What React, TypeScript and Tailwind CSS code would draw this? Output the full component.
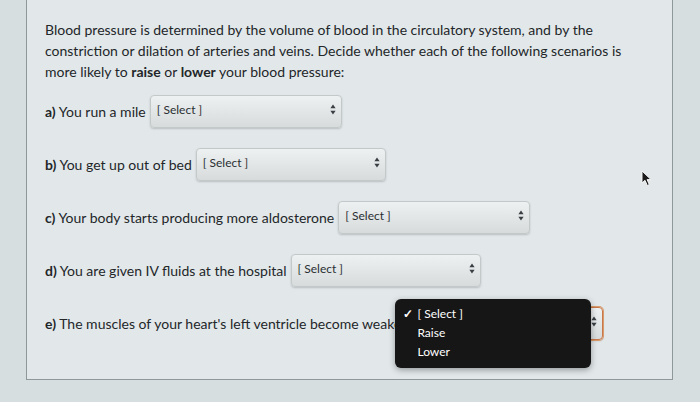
import React from "react";

const SortArrows = () => (
  <svg width="6" height="11" viewBox="0 0 6 11" className="shrink-0">
    <path d="M3 0.5 L5.6 4.3 H0.4 Z" fill="#3a3f44" />
    <path d="M3 10.5 L5.6 6.7 H0.4 Z" fill="#3a3f44" />
  </svg>
);

const SelectBox = ({ width, focused }: { width: number; focused?: boolean }) => (
  <div
    style={{ width }}
    className={
      "flex h-[33px] shrink-0 items-center justify-between rounded-[4px] border bg-gradient-to-b from-[#eef1f1] to-[#d7dbdc] pb-1 pl-[6px] pr-[5px] shadow-[0_1px_2px_rgba(0,0,0,0.18)] " +
      (focused ? "border-[#c8794a] ring-1 ring-[#d99a6c]" : "border-[#c3c8c9]")
    }
  >
    <span className="text-[12px] text-[#2a2f33]">[ Select ]</span>
    <SortArrows />
  </div>
);

const rows = [
  { tag: "a)", text: "You run a mile", width: 192 },
  { tag: "b)", text: "You get up out of bed", width: 190 },
  { tag: "c)", text: "Your body starts producing more aldosterone", width: 192 },
  { tag: "d)", text: "You are given IV fluids at the hospital", width: 190 },
];

const Cursor = () => (
  <svg width="12" height="17" viewBox="0 0 12 17" className="absolute left-[614px] top-[170px]">
    <path
      d="M1 1 L1 13 L4 10.3 L6.3 15.5 L8.3 14.6 L6.1 9.6 L10 9.6 Z"
      fill="#1a1a1a"
      stroke="#f4f4f4"
      strokeWidth="1"
    />
  </svg>
);

export default function App() {
  return (
    <div
      className="h-[402px] w-[700px] overflow-hidden bg-[#d7dedf] text-[#222629]"
      style={{ fontFamily: "Lato, 'Open Sans', sans-serif" }}
    >
      <div className="relative ml-[26px] h-[380px] w-[647px] border-x border-b border-[#8e9799] bg-[#e2e8ea]">
        <p className="ml-[18px] pt-[19px] text-[14px] leading-[21px]">
          Blood pressure is determined by the volume of blood in the circulatory system, and by the
          <br />
          constriction or dilation of arteries and veins. Decide whether each of the following scenarios is
          <br />
          more likely to <b>raise</b> or <b>lower</b> your blood pressure:
        </p>

        <div className="ml-[18px] mt-[13px] flex flex-col gap-[20px]">
          {rows.map((r) => (
            <div key={r.tag} className="flex items-center gap-[4px]">
              <span className="text-[14px]">
                <b>{r.tag}</b> {r.text}
              </span>
              <SelectBox width={r.width} />
            </div>
          ))}

          <div className="flex items-center gap-[4px]">
            <span className="whitespace-nowrap text-[14px]">
              <b>e)</b> The muscles of your heart's left ventricle become weaker
            </span>
            <div className="relative">
              <SelectBox width={193} focused />
              <div className="absolute left-[-15px] top-[-8px] flex h-[69px] w-[196px] flex-col rounded-[6px] bg-[#161616] px-[8px] py-[5px] text-[12px] leading-[19px] text-white shadow-[0_2px_6px_rgba(0,0,0,0.35)]">
                <div className="flex items-center">
                  <span className="w-[14px] text-[12px] font-bold">✓</span>
                  <span>[ Select ]</span>
                </div>
                <div className="pl-[14px]">Raise</div>
                <div className="pl-[14px]">Lower</div>
              </div>
            </div>
          </div>
        </div>

        <Cursor />
      </div>
    </div>
  );
}
